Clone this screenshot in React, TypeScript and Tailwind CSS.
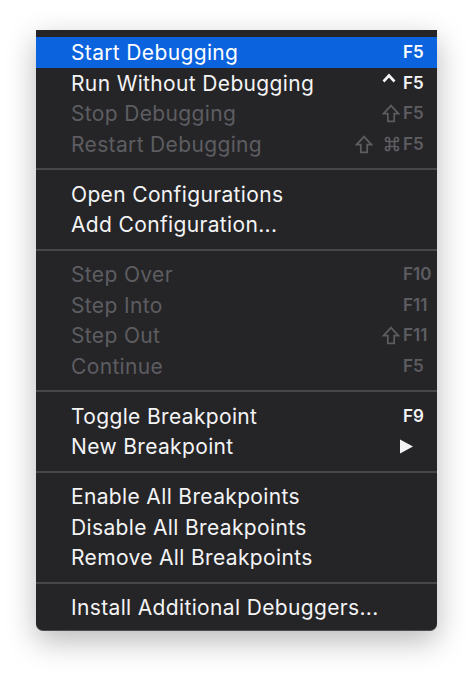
import React from 'react'

type Item = {
  label: string
  mods?: string
  keyName?: string
  disabled?: boolean
  active?: boolean
  submenu?: boolean
}

const groups: Item[][] = [
  [
    { label: 'Start Debugging', keyName: 'F5', active: true },
    { label: 'Run Without Debugging', mods: '^', keyName: 'F5' },
    { label: 'Stop Debugging', mods: '⇧', keyName: 'F5', disabled: true },
    { label: 'Restart Debugging', mods: '⇧⌘', keyName: 'F5', disabled: true },
  ],
  [
    { label: 'Open Configurations' },
    { label: 'Add Configuration...' },
  ],
  [
    { label: 'Step Over', keyName: 'F10', disabled: true },
    { label: 'Step Into', keyName: 'F11', disabled: true },
    { label: 'Step Out', mods: '⇧', keyName: 'F11', disabled: true },
    { label: 'Continue', keyName: 'F5', disabled: true },
  ],
  [
    { label: 'Toggle Breakpoint', keyName: 'F9' },
    { label: 'New Breakpoint', submenu: true },
  ],
  [
    { label: 'Enable All Breakpoints' },
    { label: 'Disable All Breakpoints' },
    { label: 'Remove All Breakpoints' },
  ],
  [{ label: 'Install Additional Debuggers...' }],
]

const ShiftIcon = () => (
  <svg width="18" height="19" viewBox="0 0 18 19">
    <path d="M9 1.6 L16.4 9.6 H12.2 V17.4 H5.8 V9.6 H1.6 Z" fill="none" stroke="currentColor" strokeWidth="1.7" strokeLinejoin="miter" />
  </svg>
)

const CmdIcon = () => (
  <svg width="16" height="16" viewBox="0 0 16 16">
    <path
      d="M5.5 5.5 V3.5 A2 2 0 1 0 3.5 5.5 H12.5 A2 2 0 1 0 10.5 3.5 V12.5 A2 2 0 1 0 12.5 10.5 H3.5 A2 2 0 1 0 5.5 12.5 Z"
      fill="none"
      stroke="currentColor"
      strokeWidth="1.7"
    />
  </svg>
)

const Mods: React.FC<{ mods: string }> = ({ mods }) => {
  if (mods === '^') {
    return (
      <svg width="14" height="10" viewBox="0 0 14 10" className="mb-[10px] mr-[6px]">
        <path d="M1.5 8.5 L7 2.5 L12.5 8.5" fill="none" stroke="currentColor" strokeWidth="2.6" strokeLinejoin="miter" />
      </svg>
    )
  }
  return (
    <span className="flex items-center gap-[11px] pr-[2px]">
      {mods.split('').map((m, i) => (m === '⇧' ? <ShiftIcon key={i} /> : <CmdIcon key={i} />))}
    </span>
  )
}

const MenuRow: React.FC<{ item: Item }> = ({ item }) => {
  const color = item.disabled ? 'text-[#5d5d61]' : 'text-[#f4f4f5]'
  return (
    <div className={`flex h-[30.7px] items-center ${item.active ? 'bg-[#0b63de]' : ''}`}>
      <div className={`flex-1 whitespace-nowrap pl-[35px] text-[21px] leading-none tracking-[0.35px] ${item.active ? 'text-white' : color}`}>
        {item.label}
      </div>
      <div className={`flex shrink-0 items-center ${item.active ? 'text-white' : color}`}>
        <div className="flex items-center justify-end">{item.mods && <Mods mods={item.mods} />}</div>
        <div className="w-[35px] pl-[1px] text-[17px] font-semibold leading-none">
          {item.submenu ? (
            <svg width="15" height="15" viewBox="0 0 15 15" className="ml-[-4px]">
              <path d="M1 0.5 L14 7.5 L1 14.5 Z" fill="#f4f4f5" />
            </svg>
          ) : (
            item.keyName
          )}
        </div>
      </div>
    </div>
  )
}

export default function App() {
  return (
    <div className="h-[673px] w-[474px] bg-white pt-[30px] pl-[36px]" style={{ fontFamily: 'Inter, "Noto Sans", sans-serif' }}>
      <div className="w-[401px] rounded-b-[7px] border-b border-[#4e4e52] bg-[#252528] py-[7px] shadow-[0_10px_30px_rgba(0,0,0,0.28)]">
        {groups.map((g, gi) => (
          <div key={gi}>
            {gi > 0 && (
              <div className="flex h-[19px] items-center">
                <div className="h-[2px] w-full bg-[#47474b]" />
              </div>
            )}
            {g.map((item) => (
              <MenuRow key={item.label} item={item} />
            ))}
          </div>
        ))}
      </div>
    </div>
  )
}
